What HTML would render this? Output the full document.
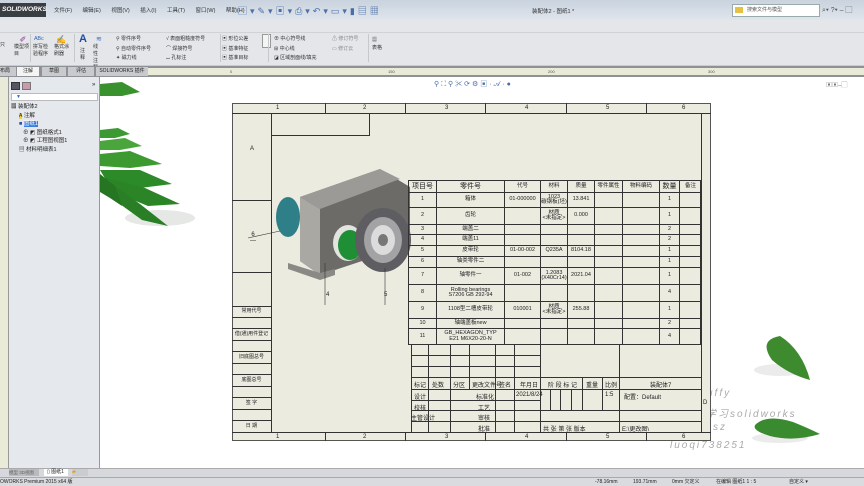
<!DOCTYPE html>
<html><head><meta charset="utf-8"><style>
*{margin:0;padding:0;box-sizing:border-box}
body{width:864px;height:486px;overflow:hidden;position:relative;background:#fff;font-family:"Liberation Sans","Noto Sans CJK SC",sans-serif;font-size:6px;color:#222}
.a{position:absolute}
.l{position:absolute;background:#333}
.t{position:absolute;font-size:6px;color:#222;white-space:nowrap;text-align:center}
</style></head><body>
<div class="a" style="left:0;top:0;width:864px;height:20px;background:linear-gradient(#c9d3de,#dfe5ec)"></div>
<div class="a" style="left:0;top:3px;width:46px;height:14px;background:#3a3d42;color:#fff;font-size:6.5px;font-weight:bold;line-height:14px;padding-left:2px;font-style:italic">SOLIDWORKS</div>
<div class="a" style="left:54px;top:6px;font-size:5.5px;color:#333;word-spacing:9px">文件(F) 编辑(E) 视图(V) 插入(I) 工具(T) 窗口(W) 帮助(H)</div>
<div class="a" style="left:238px;top:4px;width:140px;height:12px;font-size:9px;color:#4a6fa8;letter-spacing:3px">▢▾✎▾▣▾⎙▾↶▾▭▾▮▤▦</div>
<div class="a" style="left:532px;top:7px;font-size:5.5px;color:#333">装配体2 - 图纸1 *</div>
<div class="a" style="left:732px;top:4px;width:88px;height:13px;background:#fff;border:1px solid #9aa;font-size:5px;line-height:11px;padding-left:14px;color:#555">搜索文件与模型</div>
<div class="a" style="left:735px;top:7px;width:8px;height:6px;background:#e8c040"></div>
<div class="a" style="left:822px;top:5px;font-size:7px;color:#555">⌕▾ ?▾ ‒ ▢</div>
<div class="a" style="left:0;top:20px;width:864px;height:46px;background:#e4e6e9;border-bottom:1px solid #c8cbcf"></div>
<div class="a" style="left:0;top:32px;width:864px;height:1px;background:#d0d3d6"></div>
<div class="a" style="left:0;top:42px;font-size:5px;color:#333;line-height:7px">
<span class="a" style="left:0;top:0">只</span>
<span class="a" style="left:13px;top:-6px;width:20px;text-align:center;color:#8a2d9a;font-size:8px">✐</span>
<span class="a" style="left:14px;top:2px;width:18px">模型项<br>目</span>
<span class="a" style="left:34px;top:-6px;color:#3a6dbb;font-size:8px">ᴬᴮᶜ</span>
<span class="a" style="left:33px;top:2px;width:20px">拼写检<br>验程序</span>
<span class="a" style="left:56px;top:-6px;color:#3a6dbb;font-size:8px">✍</span>
<span class="a" style="left:54px;top:2px;width:20px">格式涂<br>刷器</span>
<span class="a" style="left:79px;top:-6px;color:#1a4fa0;font-size:11px;font-weight:bold">A</span>
<span class="a" style="left:80px;top:6px">注释</span>
<span class="a" style="left:96px;top:-6px;color:#3a6dbb;font-size:7px">≋</span>
<span class="a" style="left:93px;top:2px">线性注<br>释阵列</span>
</div>
<div class="a" style="left:116px;top:35px;font-size:5px;line-height:9.5px;color:#333">⚲ 零件序号<br>⚲ 自动零件序号<br>✦ 磁力线</div>
<div class="a" style="left:166px;top:35px;font-size:5px;line-height:9.5px;color:#333">√ 表面粗糙度符号<br>⌒ 焊接符号<br>⌴ 孔标注</div>
<div class="a" style="left:222px;top:35px;font-size:5px;line-height:9.5px;color:#333">▣ 形位公差<br>▣ 基准特征<br>▣ 基准目标</div>
<div class="a" style="left:262px;top:34px;width:9px;height:14px;border:1px solid #999;background:#f4f4f4"></div>
<div class="a" style="left:274px;top:35px;font-size:5px;line-height:9.5px;color:#333">⊕ 中心符号线<br>⊞ 中心线<br>◪ 区域剖面线/填充</div>
<div class="a" style="left:332px;top:35px;font-size:5px;line-height:9.5px;color:#888">⚠ 修订符号<br>▭ 修订云</div>
<div class="a" style="left:372px;top:36px;font-size:5px;line-height:8px;color:#333">▦<br>表格</div>
<div class="a" style="left:74px;top:34px;width:1px;height:28px;background:#c6c9cc"></div>
<div class="a" style="left:30px;top:34px;width:1px;height:28px;background:#c6c9cc"></div>
<div class="a" style="left:220px;top:34px;width:1px;height:28px;background:#c6c9cc"></div>
<div class="a" style="left:268px;top:34px;width:1px;height:28px;background:#c6c9cc"></div>
<div class="a" style="left:368px;top:34px;width:1px;height:28px;background:#c6c9cc"></div>
<div class="a" style="left:0;top:66px;width:864px;height:11px;background:#8e9196"></div>
<div class="a" style="left:0;top:67px;width:148px;height:9px;font-size:5px;line-height:9px;color:#222">
<span class="a" style="left:0;width:16px;background:#c8cacd">布局</span>
<span class="a" style="left:17px;width:22px;background:#f4f4f4;text-align:center">注解</span>
<span class="a" style="left:42px;width:24px;background:#c8cacd;text-align:center">草图</span>
<span class="a" style="left:68px;width:26px;background:#c8cacd;text-align:center">评估</span>
<span class="a" style="left:96px;width:52px;background:#c8cacd;text-align:center">SOLIDWORKS 插件</span></div>
<div class="a" style="left:148px;top:68px;width:716px;height:7px;background:#e9ead8;font-size:4px;color:#555;line-height:7px"><span class="a" style="left:82px">0</span><span class="a" style="left:240px">150</span><span class="a" style="left:400px">200</span><span class="a" style="left:560px">300</span></div>
<div class="a" style="left:0;top:77px;width:9px;height:393px;background:#e9ead8;border-right:1px solid #999"></div>
<div class="a" style="left:9px;top:77px;width:91px;height:393px;background:#e5e8ec;border-right:1px solid #999"></div>
<div class="a" style="left:11px;top:82px;width:9px;height:8px;background:#556;border:1px solid #333"></div>
<div class="a" style="left:22px;top:82px;width:9px;height:8px;background:#c9a;border:1px solid #777"></div>
<div class="a" style="left:92px;top:82px;font-size:6px">»</div>
<div class="a" style="left:11px;top:93px;width:87px;height:8px;background:#fff;border:1px solid #bbb;font-size:5px;color:#2a6ec8;line-height:6px;padding-left:4px">▼</div>
<div class="a" style="left:11px;top:103px;font-size:5.5px;line-height:8.5px;color:#222">
<div>▩ 装配体2</div>
<div style="padding-left:8px"><span style="background:#f0d040;font-size:5px">A</span> 注解</div>
<div style="padding-left:8px"><span style="color:#2255aa">■</span> <span style="background:#3a7ee0;color:#fff">图纸1</span></div>
<div style="padding-left:12px">⊕ ◩ 图纸格式1</div>
<div style="padding-left:12px">⊕ ◩ 工程图视图1</div>
<div style="padding-left:8px">▤ 材料明细表1</div></div>
<div class="a" style="left:434px;top:79px;font-size:7px;color:#4a6fa8;letter-spacing:2px">⚲⛶⚲✂⟳⚙▣·𝒜·●</div>
<div class="a" style="left:826px;top:80px;font-size:6px;color:#777">▣▣‒▢</div>
<svg class="a" style="left:100px;top:78px" width="110" height="160" viewBox="0 0 110 160">
<ellipse cx="60" cy="140" rx="35" ry="8" fill="#e6e8e6"/>
<path d="M0 6 L22 4 L40 14 L22 18 L0 18Z" fill="#3a922e"/>
<path d="M0 52 L18 50 L30 56 L15 60 L0 60Z" fill="#3d9a33"/>
<path d="M0 63 L25 60 L42 68 L20 72 L0 72Z" fill="#4aa63c"/>
<path d="M0 76 L30 73 L62 86 L30 90 L0 88Z" fill="#3c9a30"/>
<path d="M0 92 L40 92 L72 106 L40 110 L6 102Z" fill="#2c8a28"/>
<path d="M6 100 L45 110 L80 126 L48 128 L14 114Z" fill="#2b8426"/>
<path d="M12 106 L40 126 L68 148 L42 142 L20 126Z" fill="#2a7e25"/>
<path d="M0 96 L15 108 L22 128 L10 120 L0 114Z" fill="#267522"/>
</svg>
<svg class="a" style="left:750px;top:332px" width="80" height="120" viewBox="0 0 80 120">
<ellipse cx="30" cy="38" rx="26" ry="6" fill="#ddd" opacity=".6"/>
<path d="M30 4 Q8 8 22 28 Q38 42 60 48 Q52 18 30 4Z" fill="#3e8a2e"/>
<ellipse cx="30" cy="106" rx="28" ry="5" fill="#ddd" opacity=".6"/>
<path d="M6 92 Q18 82 43 90 Q58 96 70 102 Q43 110 20 104 Q0 98 6 92Z" fill="#3a8a30"/></svg>
<div class="a" style="left:707px;top:388px;font-size:10px;font-style:italic;color:#aaa;letter-spacing:2px">uffy</div>
<div class="a" style="left:706px;top:405px;font-size:10px;font-style:italic;color:#aaa;letter-spacing:2px">学习solidworks</div>
<div class="a" style="left:706px;top:422px;font-size:10px;font-style:italic;color:#aaa;letter-spacing:2px">xsz</div>
<div class="a" style="left:670px;top:440px;font-size:10px;font-style:italic;color:#aaa;letter-spacing:2px">luoqi738251</div>
<div class="a" style="left:232px;top:103px;width:479px;height:338px;background:#ecebe0;border:1px solid #555"></div>
<div class="l" style="left:232px;top:113px;width:479px;height:1px"></div>
<div class="l" style="left:232px;top:432px;width:479px;height:1px"></div>
<div class="l" style="left:271px;top:113px;width:1px;height:319px"></div>
<div class="l" style="left:701px;top:113px;width:1px;height:319px"></div>
<div class="l" style="left:271px;top:135px;width:99px;height:1px"></div>
<div class="l" style="left:369px;top:113px;width:1px;height:22px"></div>
<div class="l" style="left:232px;top:200px;width:39px;height:1px"></div>
<div class="l" style="left:232px;top:272px;width:39px;height:1px"></div>
<div class="t" style="left:250px;top:146px">A</div>
<div class="t" style="left:703px;top:400px">D</div>
<div class="t" style="left:276px;top:105px">1</div><div class="t" style="left:363px;top:105px">2</div><div class="t" style="left:445px;top:105px">3</div><div class="t" style="left:525px;top:105px">4</div><div class="t" style="left:606px;top:105px">5</div><div class="t" style="left:682px;top:105px">6</div>
<div class="t" style="left:276px;top:434px">1</div><div class="t" style="left:363px;top:434px">2</div><div class="t" style="left:445px;top:434px">3</div><div class="t" style="left:525px;top:434px">4</div><div class="t" style="left:606px;top:434px">5</div><div class="t" style="left:682px;top:434px">6</div>
<div class="l" style="left:325px;top:103px;width:1px;height:10px"></div><div class="l" style="left:405px;top:103px;width:1px;height:10px"></div><div class="l" style="left:485px;top:103px;width:1px;height:10px"></div><div class="l" style="left:566px;top:103px;width:1px;height:10px"></div><div class="l" style="left:646px;top:103px;width:1px;height:10px"></div>
<div class="l" style="left:325px;top:432px;width:1px;height:9px"></div><div class="l" style="left:405px;top:432px;width:1px;height:9px"></div><div class="l" style="left:485px;top:432px;width:1px;height:9px"></div><div class="l" style="left:566px;top:432px;width:1px;height:9px"></div><div class="l" style="left:646px;top:432px;width:1px;height:9px"></div>
<div class="a" style="left:232px;top:306px;width:39px;height:126px;font-size:5px;line-height:10.5px;text-align:center">
<div style="border-bottom:1px solid #333">常用代号</div><div style="border-bottom:1px solid #333">&nbsp;</div>
<div style="border-bottom:1px solid #333">借(通)用件登记</div><div style="border-bottom:1px solid #333">&nbsp;</div>
<div style="border-bottom:1px solid #333">旧底图总号</div><div style="border-bottom:1px solid #333">&nbsp;</div>
<div style="border-bottom:1px solid #333">底图总号</div><div style="border-bottom:1px solid #333">&nbsp;</div>
<div style="border-bottom:1px solid #333">签 字</div><div style="border-bottom:1px solid #333">&nbsp;</div>
<div>日 期</div></div>
<div class="l" style="left:232px;top:306px;width:39px;height:1px"></div>
<svg class="a" style="left:240px;top:165px" width="175" height="140" viewBox="0 0 175 140">
<ellipse cx="48" cy="52" rx="12" ry="20" fill="#2f7f88"/>
<path d="M60 32 L140 4 L170 22 L170 80 L80 110 L60 96Z" fill="#6c6b67"/>
<path d="M60 32 L140 4 L160 14 L80 44Z" fill="#9b9a96"/>
<path d="M60 32 L80 44 L80 110 L60 96Z" fill="#a9a8a3"/>
<path d="M48 98 L80 108 L95 104 L95 110 L80 115 L48 104Z" fill="#8a8985"/>
<ellipse cx="108" cy="78" rx="15" ry="18" fill="#e3e3e0"/>
<ellipse cx="110" cy="80" rx="12" ry="15" fill="#1f8f35"/>
<ellipse cx="143" cy="75" rx="28" ry="32" fill="#5e5d61"/>
<ellipse cx="143" cy="75" rx="19" ry="23" fill="#a3a3a6"/>
<ellipse cx="143" cy="75" rx="12" ry="15" fill="#dcdcdc"/>
<ellipse cx="143" cy="75" rx="5" ry="6" fill="#777"/>
<path d="M8 73 L40 66 M85 98 L85 145" stroke="#333" stroke-width=".6"/>
<path d="M145 103 L145 140" stroke="#333" stroke-width=".6"/>
</svg>
<div class="t" style="left:250px;top:232px">6<br>—</div>
<div class="t" style="left:326px;top:292px">4</div>
<div class="t" style="left:384px;top:292px">5</div>
<div class="a" style="left:408px;top:180px;width:293px;height:165px;border:1px solid #333;font-size:5.5px"></div>
<div class="a" style="left:408px;top:180px">
<table style="border-collapse:collapse;font-size:5.5px;text-align:center;table-layout:fixed">
<colgroup><col style="width:28px"><col style="width:68px"><col style="width:36px"><col style="width:27px"><col style="width:27px"><col style="width:28px"><col style="width:37px"><col style="width:20px"><col style="width:22px"></colgroup>
<style>td{border:1px solid #333;padding:0;line-height:5.5px;overflow:hidden;white-space:nowrap}</style>
<tr style="height:12px"><td style="font-size:7px">项目号</td><td style="font-size:7px">零件号</td><td>代号</td><td>材料</td><td>质量</td><td>零件属性</td><td>物料编码</td><td style="font-size:7px">数量</td><td>备注</td></tr>
<tr style="height:15px"><td>1</td><td>箱体</td><td>01-000000</td><td>1023<br>碳钢板(坯)</td><td>13.841</td><td></td><td></td><td>1</td><td></td></tr>
<tr style="height:17px"><td>2</td><td>齿轮</td><td></td><td>材质<br>&lt;未指定&gt;</td><td>0.000</td><td></td><td></td><td>1</td><td></td></tr>
<tr style="height:10px"><td>3</td><td>端盖二</td><td></td><td></td><td></td><td></td><td></td><td>2</td><td></td></tr>
<tr style="height:11px"><td>4</td><td>端盖11</td><td></td><td></td><td></td><td></td><td></td><td>2</td><td></td></tr>
<tr style="height:11px"><td>5</td><td>皮带轮</td><td>01-00-002</td><td>Q235A</td><td>8104.18</td><td></td><td></td><td>1</td><td></td></tr>
<tr style="height:11px"><td>6</td><td>轴类零件二</td><td></td><td></td><td></td><td></td><td></td><td>1</td><td></td></tr>
<tr style="height:17px"><td>7</td><td>轴零件一</td><td>01-002</td><td>1.2083<br>(X40Cr14)</td><td>2021.04</td><td></td><td></td><td>1</td><td></td></tr>
<tr style="height:17px"><td>8</td><td>Rolling bearings<br>S7206 GB 292-94</td><td></td><td></td><td></td><td></td><td></td><td>4</td><td></td></tr>
<tr style="height:17px"><td>9</td><td>1108型二槽皮带轮</td><td>010001</td><td>材质<br>&lt;未指定&gt;</td><td>255.88</td><td></td><td></td><td>1</td><td></td></tr>
<tr style="height:10px"><td>10</td><td>轴端盖板new</td><td></td><td></td><td></td><td></td><td></td><td>2</td><td></td></tr>
<tr style="height:16px"><td>11</td><td>GB_HEXAGON_TYP<br>E21 M6X20-20-N</td><td></td><td></td><td></td><td></td><td></td><td>4</td><td></td></tr>
</table></div>
<div class="l" style="left:411px;top:345px;width:1px;height:87px"></div>
<div class="l" style="left:411px;top:355px;width:129px;height:1px"></div>
<div class="l" style="left:411px;top:366px;width:129px;height:1px"></div>
<div class="l" style="left:411px;top:377px;width:290px;height:1px"></div>
<div class="l" style="left:411px;top:389px;width:290px;height:1px"></div>
<div class="l" style="left:411px;top:400px;width:129px;height:1px"></div>
<div class="l" style="left:411px;top:410px;width:290px;height:1px"></div>
<div class="l" style="left:411px;top:421px;width:290px;height:1px"></div>
<div class="l" style="left:428px;top:345px;width:1px;height:87px"></div>
<div class="l" style="left:450px;top:345px;width:1px;height:87px"></div>
<div class="l" style="left:469px;top:345px;width:1px;height:44px"></div>
<div class="l" style="left:495px;top:345px;width:1px;height:87px"></div>
<div class="l" style="left:514px;top:345px;width:1px;height:87px"></div>
<div class="l" style="left:540px;top:345px;width:1px;height:87px"></div>
<div class="l" style="left:582px;top:377px;width:1px;height:33px"></div>
<div class="l" style="left:602px;top:377px;width:1px;height:33px"></div>
<div class="l" style="left:619px;top:345px;width:1px;height:87px"></div>
<div class="l" style="left:550px;top:389px;width:1px;height:21px"></div><div class="l" style="left:560px;top:389px;width:1px;height:21px"></div><div class="l" style="left:571px;top:389px;width:1px;height:21px"></div>
<div class="t" style="left:414px;top:380px">标记</div><div class="t" style="left:432px;top:380px">处数</div><div class="t" style="left:453px;top:380px">分区</div><div class="t" style="left:472px;top:380px">更改文件号</div><div class="t" style="left:499px;top:380px">签名</div><div class="t" style="left:520px;top:380px">年月日</div>
<div class="t" style="left:548px;top:380px">阶 段 标 记</div><div class="t" style="left:586px;top:380px">重量</div><div class="t" style="left:605px;top:380px">比例</div><div class="t" style="left:650px;top:380px">装配体7</div>
<div class="t" style="left:414px;top:392px">设计</div><div class="t" style="left:476px;top:392px">标准化</div><div class="t" style="left:516px;top:392px">2021/8/24</div><div class="t" style="left:605px;top:392px">1:5</div><div class="t" style="left:624px;top:392px">配置：Default</div>
<div class="t" style="left:414px;top:403px">校核</div><div class="t" style="left:478px;top:403px">工艺</div>
<div class="t" style="left:411px;top:413px">主管设计</div><div class="t" style="left:478px;top:413px">审核</div>
<div class="t" style="left:478px;top:424px">批准</div><div class="t" style="left:543px;top:424px">共 张 第 张 版本</div><div class="t" style="left:622px;top:424px">E:\更改图\</div>
<div class="a" style="left:0;top:468px;width:864px;height:9px;background:#d6d8db;border-top:1px solid #aaa"></div>
<div class="a" style="left:9px;top:469px;width:30px;height:7px;background:#b8bbbf;font-size:4.5px;color:#666;line-height:7px">模型 3D视图</div>
<div class="a" style="left:44px;top:469px;width:24px;height:7px;background:#fff;font-size:5px;line-height:7px;padding-left:3px">▯ 图纸1</div>
<div class="a" style="left:72px;top:469px;width:16px;height:7px;background:#c9ccd0;font-size:5px;line-height:7px;color:#e90">▰</div>
<div class="a" style="left:0;top:477px;width:864px;height:9px;background:#d9dbde;border-top:1px solid #aaa;font-size:5px;line-height:8px">
<span class="a" style="left:0">OWORKS Premium 2015 x64 版</span>
<span class="a" style="left:595px">-78.16mm</span><span class="a" style="left:633px">193.71mm</span><span class="a" style="left:672px">0mm 欠定义</span><span class="a" style="left:716px">在编辑 图纸1  1 : 5</span><span class="a" style="left:789px">自定义 ▾</span></div>
</body></html>
